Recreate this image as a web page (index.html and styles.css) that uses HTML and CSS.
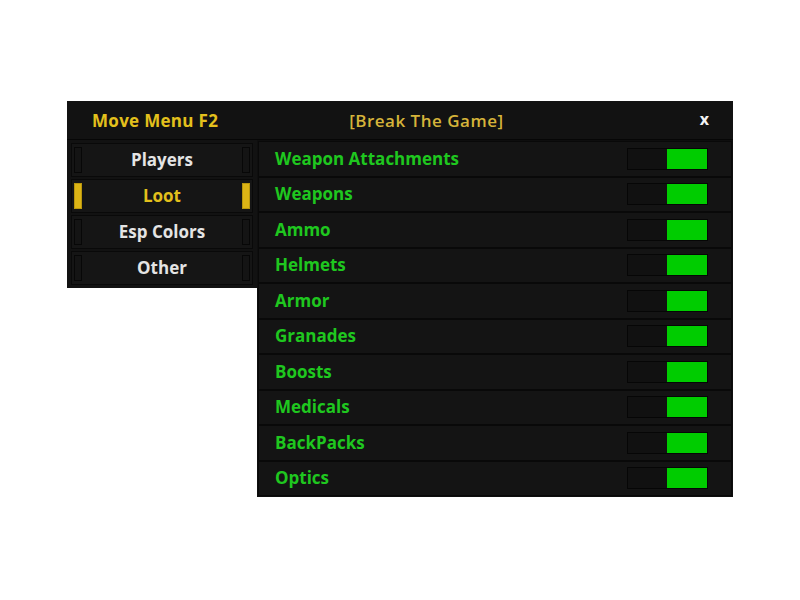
FILE: index.html
```html
<!DOCTYPE html>
<html>
<head>
<meta charset="utf-8">
<link rel="stylesheet" href="styles.css">
</head>
<body>
<div class="window">
  <div class="header">
    <span class="title">Move Menu F2</span>
    <span class="brand">[Break The Game]</span>
    <span class="close">x</span>
  </div>
  <div class="body">
    <div class="tabs">
      <div class="tab"><span class="ind"></span><span class="tab-label">Players</span><span class="ind"></span></div>
      <div class="tab active"><span class="ind"></span><span class="tab-label">Loot</span><span class="ind"></span></div>
      <div class="tab"><span class="ind"></span><span class="tab-label">Esp Colors</span><span class="ind"></span></div>
      <div class="tab"><span class="ind"></span><span class="tab-label">Other</span><span class="ind"></span></div>
    </div>
    <div class="list">
      <div class="row"><span class="label">Weapon Attachments</span><span class="toggle"><span class="knob"></span></span></div>
      <div class="row"><span class="label">Weapons</span><span class="toggle"><span class="knob"></span></span></div>
      <div class="row"><span class="label">Ammo</span><span class="toggle"><span class="knob"></span></span></div>
      <div class="row"><span class="label">Helmets</span><span class="toggle"><span class="knob"></span></span></div>
      <div class="row"><span class="label">Armor</span><span class="toggle"><span class="knob"></span></span></div>
      <div class="row"><span class="label">Granades</span><span class="toggle"><span class="knob"></span></span></div>
      <div class="row"><span class="label">Boosts</span><span class="toggle"><span class="knob"></span></span></div>
      <div class="row"><span class="label">Medicals</span><span class="toggle"><span class="knob"></span></span></div>
      <div class="row"><span class="label">BackPacks</span><span class="toggle"><span class="knob"></span></span></div>
      <div class="row"><span class="label">Optics</span><span class="toggle"><span class="knob"></span></span></div>
    </div>
  </div>
</div>
</body>
</html>
```
FILE: styles.css
```css
html, body {
  margin: 0;
  padding: 0;
  background: #ffffff;
}
body {
  font-family: "Open Sans", "DejaVu Sans", sans-serif;
  font-weight: 700;
  font-size: 17px;
}
.window {
  margin: 101px 0 0 67px;
  width: 666px;
}
.header {
  background: #121212;
  border-bottom: 1px solid #060606;
  display: flex;
  align-items: center;
  padding: 0 24px 0 25px;
  box-sizing: border-box;
  height: 39px;
}
.title {
  color: #e3c01c;
  letter-spacing: 0.3px;
}
.brand {
  color: #d6b43a;
  font-weight: 600;
  letter-spacing: 0.5px;
  margin-left: 131px;
}
.close {
  margin-left: auto;
  color: #f2f2f2;
  font-size: 16px;
  padding-bottom: 3px;
}
.body {
  display: flex;
  align-items: flex-start;
}
.tabs {
  width: 190px;
  box-sizing: border-box;
  background: #121212;
  padding: 3px 4px 3px 4px;
  display: flex;
  flex-direction: column;
  gap: 2px;
}
.tab {
  height: 34px;
  box-sizing: border-box;
  background: #151515;
  border: 1px solid #090909;
  display: flex;
  align-items: center;
  padding: 0 2px;
}
.ind {
  width: 8px;
  height: 26px;
  box-sizing: border-box;
  background: #141414;
  border: 1px solid #070707;
}
.tab-label {
  flex: 1;
  text-align: center;
  color: #e4e4e4;
  padding-bottom: 1px;
}
.tab.active .ind {
  background: #dcb415;
  border-color: #b8960e;
}
.tab.active .tab-label {
  color: #e3c01c;
}
.list {
  width: 476px;
  background: #0e0e0e;
  padding: 1px;
  box-sizing: border-box;
}
.row {
  height: 35.5px;
  box-sizing: border-box;
  background: #141414;
  border: 1px solid #090909;
  display: flex;
  align-items: center;
  padding: 0 23px 0 16px;
}
.label {
  color: #1fc71f;
  padding-bottom: 1px;
}
.toggle {
  margin-left: auto;
  width: 81px;
  height: 22px;
  box-sizing: border-box;
  background: #111111;
  border: 1px solid #060606;
  display: flex;
  justify-content: flex-end;
}
.knob {
  width: 40px;
  height: 100%;
  background: #00cc00;
}
```
